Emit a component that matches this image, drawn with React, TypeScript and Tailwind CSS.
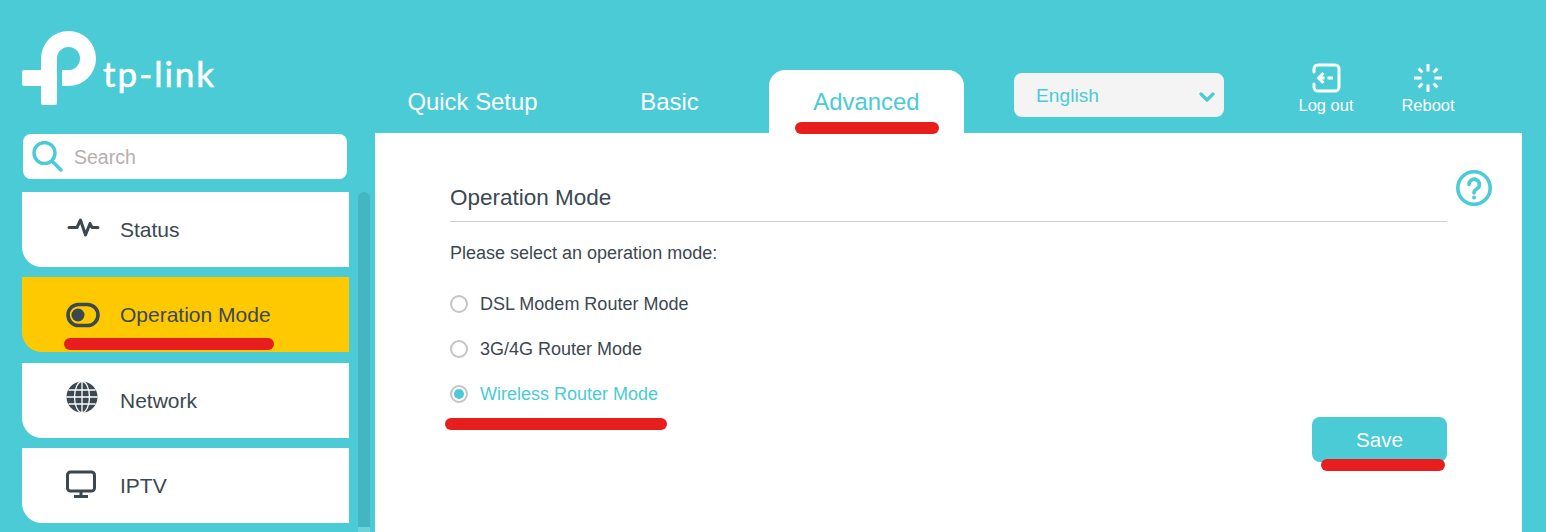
import type { ReactNode } from "react";

const TEAL = "#4acbd6";
const DARK = "#3b4852";

function Mark({ className }: { className: string }) {
  return <div className={`absolute z-10 h-[12px] rounded-full bg-[#e81e1e] ${className}`} />;
}

function Logo() {
  return (
    <div className="flex items-start">
      <svg width="76" height="76" viewBox="21 30 76 76" fill="#fff">
        <path d="M22 72A2 2 0 0 1 24 70H41V58.5A27.5 27.5 0 1 1 68.5 86H62V70H68.5A11.5 11.5 0 1 0 57 58.5V103A2 2 0 0 1 55 105H43A2 2 0 0 1 41 103V86H24A2 2 0 0 1 22 84Z" />
      </svg>
      <span className="mt-[19px] ml-[6px] font-['Lato',sans-serif] text-[35px] leading-[48px] font-normal tracking-[2px] text-white [-webkit-text-stroke:0.6px_white]">
        tp-link
      </span>
    </div>
  );
}

function PulseIcon() {
  return (
    <svg width="36" height="36" viewBox="0 0 36 36" fill="none" stroke={DARK} strokeWidth="3" strokeLinejoin="round" strokeLinecap="round" className="-translate-y-[1px]">
      <path d="M3 16.5H11L14.5 9L19.5 24L24 12.5L26 16.5H32" />
    </svg>
  );
}

function ToggleIcon() {
  return (
    <svg width="36" height="36" viewBox="0 0 36 36" fill="none">
      <rect x="2" y="7.5" width="30" height="21" rx="10.5" stroke={DARK} strokeWidth="3.6" />
      <circle cx="12" cy="18" r="6.5" fill={DARK} />
    </svg>
  );
}

function GlobeIcon() {
  return (
    <svg width="36" height="36" viewBox="0 0 36 36" fill="none" className="-translate-y-[4px]">
      <circle cx="16" cy="18" r="15.5" fill={DARK} />
      <g stroke="#fff" strokeWidth="1.3">
        <path d="M0.5 18H31.5M2.5 11H29.5M2.5 25H29.5M16 2.5V33.5" />
        <ellipse cx="16" cy="18" rx="7.5" ry="15.5" />
      </g>
    </svg>
  );
}

function MonitorIcon() {
  return (
    <svg width="36" height="36" viewBox="0 0 36 36" fill="none" stroke={DARK} strokeWidth="3" className="-translate-y-[1px]">
      <rect x="1.5" y="5" width="27" height="19" rx="3" />
      <path d="M15 24V29M8 29.5H22" />
    </svg>
  );
}

function MenuItem({ icon, label, active, className = "", children }: { icon: ReactNode; label: string; active?: boolean; className?: string; children?: ReactNode }) {
  return (
    <div
      className={`relative flex h-[75px] items-center gap-[18px] rounded-bl-[20px] pl-[44px] text-[21px] text-[#3b4852] ${
        active ? "bg-[#ffc900]" : "bg-white"
      } ${className}`}
    >
      {icon}
      <span>{label}</span>
      {children}
    </div>
  );
}

function Radio({ label, checked }: { label: string; checked?: boolean }) {
  return (
    <label className={`flex h-[24px] items-center gap-[12px] text-[18px] ${checked ? "text-[#4acbd6]" : "text-[#3b4852]"}`}>
      <span className="flex h-[18px] w-[18px] items-center justify-center rounded-full border-2 border-[#c4c4c4]">
        {checked && <span className="h-[10px] w-[10px] rounded-full bg-[#4acbd6]" />}
      </span>
      {label}
    </label>
  );
}

export default function App() {
  return (
    <div className="flex h-[532px] w-[1546px] flex-col overflow-hidden bg-[#4acbd6] font-['Liberation_Sans',Arial,sans-serif]">
      {/* top bar */}
      <header className="flex h-[133px] shrink-0">
        <div className="w-[375px] pt-[30px] pl-[21px]">
          <Logo />
        </div>
        <nav className="flex items-end gap-[2px] text-[23.9px] text-white">
          <div className="flex h-[63px] w-[195px] items-center justify-center">Quick Setup</div>
          <div className="flex h-[63px] w-[195px] items-center justify-center">Basic</div>
          <div className="relative flex h-[63px] w-[195px] items-center justify-center rounded-t-[16px] bg-white text-[#4acbd6]">
            Advanced
            <Mark className="top-[52px] left-[26px] w-[144px]" />
          </div>
        </nav>
        <div className="mt-[73px] ml-[50px] flex h-[44px] w-[210px] items-center justify-between rounded-lg bg-[#f4f4f4] pr-[9px] pl-[22px] text-[19.2px] text-[#4acbd6]">
          <span className="pt-[2px]">English</span>
          <svg width="16" height="10" viewBox="0 0 16 10" fill="none" stroke={TEAL} strokeWidth="3.2" strokeLinecap="round" strokeLinejoin="round" className="mt-[4px]">
            <path d="M2 2L8 8L14 2" />
          </svg>
        </div>
        <div className="ml-[51px] flex pt-[63px] text-[16.5px] leading-[20px] text-white">
          <div className="flex w-[102px] flex-col items-center">
            <svg width="30" height="30" viewBox="0 0 30 30" fill="none" stroke="#fff" strokeWidth="3" strokeLinejoin="round">
              <path d="M3 9V6A4 4 0 0 1 7 2H24A4 4 0 0 1 28 6V24A4 4 0 0 1 24 28H7A4 4 0 0 1 3 24V21" strokeLinecap="round" />
              <path d="M12.5 10L7.5 15L12.5 20M9 15H13.5M16.5 15H22" />
            </svg>
            <span className="mt-[2px]">Log out</span>
          </div>
          <div className="flex w-[102px] flex-col items-center">
            <svg width="30" height="30" viewBox="0 0 30 30" fill="none" stroke="#fff" strokeWidth="3">
              <path d="M15 1V8.5M15 21.5V29M1 15H8.5M21.5 15H29M5.5 5.5L9.5 9.5M20.5 20.5L24.5 24.5M24.5 5.5L20.5 9.5M9.5 20.5L5.5 24.5" />
            </svg>
            <span className="mt-[2px]">Reboot</span>
          </div>
        </div>
      </header>

      <div className="flex min-h-0 flex-1">
        {/* sidebar */}
        <aside className="flex w-[375px] shrink-0 flex-col pl-[22px]">
          <div className="mt-px ml-px flex h-[45px] w-[324px] shrink-0 items-center rounded-lg bg-white pl-[9px] text-[19.5px] text-[#b5b0ae]">
            <svg width="32" height="32" viewBox="0 0 32 32" fill="none" stroke={TEAL} strokeLinecap="round">
              <circle cx="12.5" cy="12" r="10.5" strokeWidth="3.4" />
              <path d="M21 21L29 29" strokeWidth="3.5" />
            </svg>
            <span className="ml-[10px] pt-[2px]">Search</span>
          </div>
          <div className="mt-[13px] flex min-h-0 flex-1 gap-[9px]">
            <div className="flex w-[327px] flex-col gap-[10px]">
              <MenuItem icon={<PulseIcon />} label="Status" />
              <MenuItem icon={<ToggleIcon />} label="Operation Mode" active>
                <Mark className="top-[61px] left-[42px] w-[210px]" />
              </MenuItem>
              <MenuItem icon={<GlobeIcon />} label="Network" className="mt-px" />
              <MenuItem icon={<MonitorIcon />} label="IPTV" />
            </div>
            <div className="flex w-[12px] flex-col justify-end overflow-hidden rounded-t-md bg-[#45b5c3]">
              <div className="h-[5px] bg-[#6ed2da]" />
            </div>
          </div>
        </aside>

        {/* content */}
        <main className="relative w-[1147px] bg-white px-[75px] pt-[49px]">
          <h1 className="border-b border-[#cfcfcf] pb-[7px] text-[22.5px] leading-[32px] text-[#3b4852]">Operation Mode</h1>
          <p className="mt-[19px] text-[18px] leading-[24px] text-[#3b4852]">Please select an operation mode:</p>
          <div className="mt-[27px] flex flex-col gap-[21px]">
            <Radio label="DSL Modem Router Mode" />
            <Radio label="3G/4G Router Mode" />
            <div className="relative">
              <Radio label="Wireless Router Mode" checked />
              <Mark className="top-[36px] -left-[5px] w-[222px]" />
            </div>
          </div>
          <div className="mt-[11px] flex justify-end">
            <button className="relative h-[45px] w-[135px] rounded-lg bg-[#4acbd6] pt-[2px] text-[20.6px] text-white">
              Save
              <Mark className="top-[42px] left-[9px] w-[124px]" />
            </button>
          </div>
          <svg width="36" height="36" viewBox="0 0 36 36" fill="none" stroke={TEAL} strokeWidth="3.6" className="absolute top-[37px] right-[30px]">
            <circle cx="18" cy="18" r="16.2" />
            <path d="M13 14.5A5.2 5.2 0 1 1 21 18.8C19 20 18 21 18 23" strokeLinecap="round" />
            <circle cx="18" cy="27.5" r="1.9" fill={TEAL} stroke="none" />
          </svg>
        </main>
      </div>
    </div>
  );
}
